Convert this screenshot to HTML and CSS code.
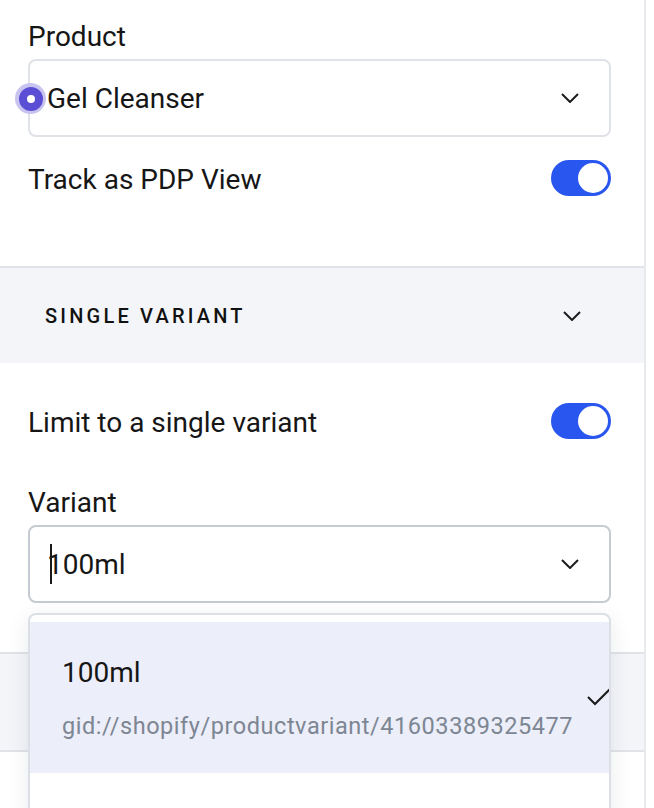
FILE: index.html
```html
<!DOCTYPE html>
<html lang="en">
<head>
<meta charset="utf-8">
<title>Product settings</title>
<link rel="stylesheet" href="styles.css">
</head>
<body>
<div class="panel">
  <section class="section first">
    <div class="label">Product</div>
    <div class="select product-select">
      <span class="radio-dot"><span class="radio-inner"></span></span>
      <span class="select-value">Gel Cleanser</span>
      <svg class="chevron" width="18" height="10" viewBox="0 0 18 10"><path d="M1 1 L9 9 L17 1" /></svg>
    </div>
    <div class="toggle-row row-1">
      <span class="toggle-label">Track as PDP View</span>
      <span class="toggle on"><span class="knob"></span></span>
    </div>
  </section>

  <div class="band-header">
    <span class="band-title">SINGLE VARIANT</span>
    <svg class="chevron" width="18" height="10" viewBox="0 0 18 10"><path d="M1 1 L9 9 L17 1" /></svg>
  </div>

  <section class="section second">
    <div class="toggle-row row-2">
      <span class="toggle-label">Limit to a single variant</span>
      <span class="toggle on"><span class="knob"></span></span>
    </div>
    <div class="field variant-field">
      <div class="label">Variant</div>
      <div class="select variant-select">
        <span class="caret"></span>
        <span class="select-value">100ml</span>
        <svg class="chevron" width="18" height="10" viewBox="0 0 18 10"><path d="M1 1 L9 9 L17 1" /></svg>
      </div>
      <div class="dropdown">
        <div class="option selected">
          <div class="option-title">100ml</div>
          <div class="option-sub">gid://shopify/productvariant/41603389325477</div>
          <svg class="check" width="30" height="22" viewBox="0 0 30 22"><path d="M1 10 L8 17 L25 0" /></svg>
        </div>
        <div class="option empty"></div>
      </div>
    </div>
  </section>

  <div class="band-header next"></div>
</div>
</body>
</html>
```

FILE: styles.css
```css
html, body {
  margin: 0;
  padding: 0;
  background: #ffffff;
}

body {
  font-family: Roboto, "Noto Sans", "Liberation Sans", sans-serif;
  color: #161616;
  overflow: hidden;
  height: 808px;
}

.panel {
  width: 644px;
  height: 808px;
  border-right: 2px solid #e8eaee;
  background: #ffffff;
  overflow: hidden;
}

.section {
  padding: 0 33px 0 28px;
}

.section.first {
  padding-top: 19px;
  padding-bottom: 70px;
}

.label {
  font-size: 28px;
  line-height: 36px;
  height: 36px;
}

.select {
  position: relative;
  box-sizing: border-box;
  height: 78px;
  margin-top: 4px;
  border: 2px solid #dfe2e7;
  border-radius: 8px;
  display: flex;
  align-items: center;
  padding: 0 30px 0 17px;
}

.select-value {
  flex: 1;
  font-size: 28px;
  line-height: 36px;
  padding-top: 2px;
}

.chevron {
  display: block;
  flex: none;
}

.chevron path {
  fill: none;
  stroke: #1c1c1c;
  stroke-width: 2;
}

.radio-dot {
  position: absolute;
  left: -15px;
  top: 22px;
  width: 31px;
  height: 31px;
  border-radius: 50%;
  background: #c8c3ef;
  display: flex;
  align-items: center;
  justify-content: center;
}

.radio-inner {
  box-sizing: border-box;
  width: 24px;
  height: 24px;
  border-radius: 50%;
  background: #ffffff;
  border: 8px solid #5a4fd4;
}

.toggle-row {
  display: flex;
  align-items: center;
  justify-content: space-between;
  height: 36px;
}

.toggle-row.row-1 {
  margin-top: 23px;
}

.toggle-label {
  font-size: 28px;
  line-height: 36px;
  padding-top: 3px;
}

.toggle {
  position: relative;
  box-sizing: border-box;
  width: 60px;
  height: 36px;
  border-radius: 18px;
  background: #2a56f0;
  display: flex;
  align-items: center;
  justify-content: flex-end;
  padding-right: 3px;
}

.knob {
  width: 30px;
  height: 30px;
  border-radius: 50%;
  background: #ffffff;
}

.band-header {
  box-sizing: border-box;
  height: 97px;
  border-top: 2px solid #e1e3e8;
  background: #f4f5f9;
  display: flex;
  align-items: center;
  justify-content: space-between;
  padding: 0 63px 0 45px;
}

.band-title {
  font-size: 20px;
  font-weight: 500;
  letter-spacing: 3.2px;
  line-height: 24px;
  padding-top: 1px;
  color: #111111;
}

.section.second {
  padding-top: 40px;
  padding-bottom: 49px;
}

.variant-field {
  position: relative;
  margin-top: 46px;
}

.variant-select {
  border-color: #c6cbd3;
}

.caret {
  position: absolute;
  left: 20px;
  top: 17px;
  width: 2px;
  height: 40px;
  background: #1a1a1a;
}

.dropdown {
  position: absolute;
  left: 0;
  right: 0;
  top: 128px;
  height: 215px;
  box-sizing: border-box;
  border: 2px solid #dcdfe5;
  border-radius: 8px;
  background: #ffffff;
  padding-top: 7px;
  overflow: hidden;
  box-shadow: 0 6px 22px rgba(20, 30, 60, 0.09);
  z-index: 2;
}

.option {
  position: relative;
}

.option.selected {
  background: #eceef9;
  height: 151px;
  box-sizing: border-box;
  padding: 33px 0 0 32px;
}

.option-title {
  font-size: 28px;
  line-height: 36px;
}

.option-sub {
  margin-top: 20px;
  font-size: 23.5px;
  letter-spacing: 0.55px;
  line-height: 30px;
  color: #7d8693;
}

.check {
  position: absolute;
  left: 557px;
  top: 65px;
}

.check path {
  fill: none;
  stroke: #1a1a1a;
  stroke-width: 2;
}

.band-header.next {
  height: 100px;
  border-bottom: 2px solid #e1e3e8;
}
```
